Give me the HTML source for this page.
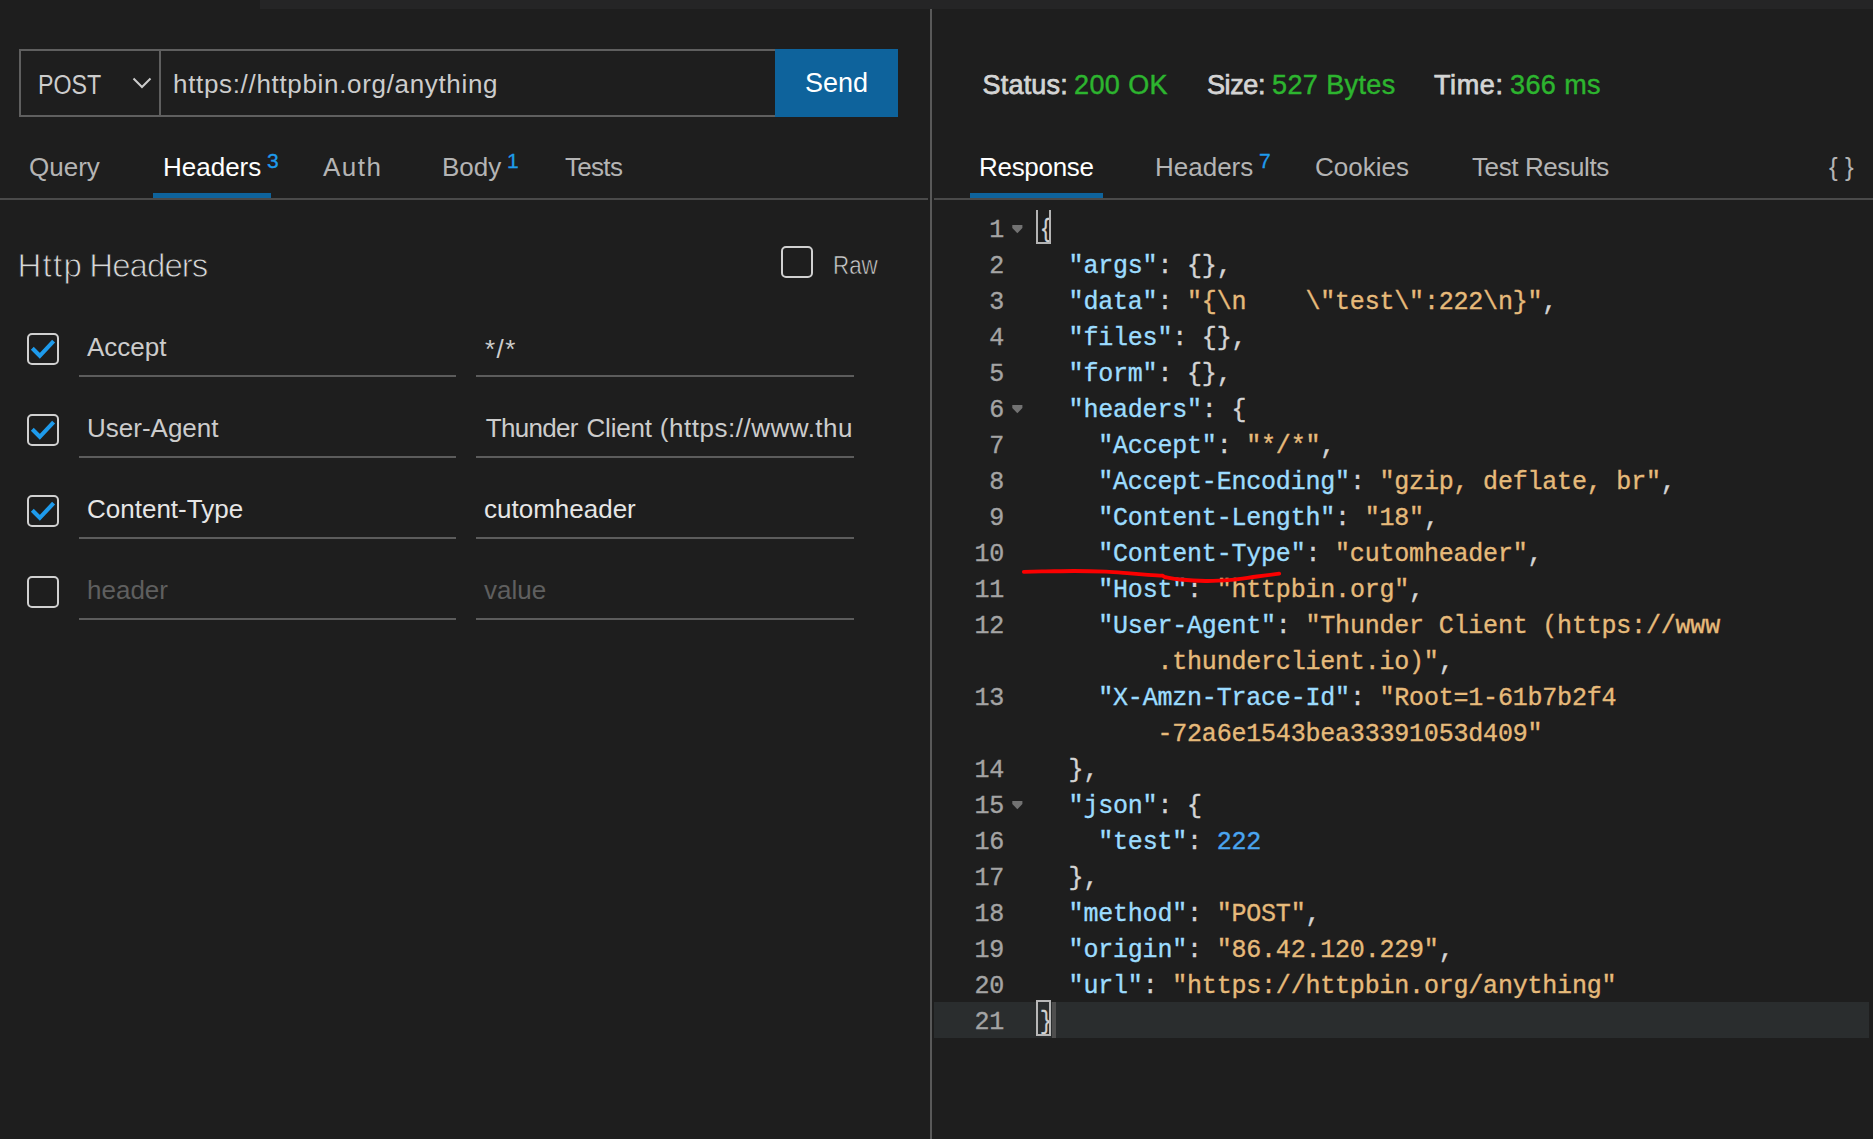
<!DOCTYPE html>
<html>
<head>
<meta charset="utf-8">
<title>Thunder Client</title>
<style>
html,body{margin:0;padding:0;}
body{width:1873px;height:1139px;background:#1e1e1e;overflow:hidden;position:relative;
  font-family:"Liberation Sans",sans-serif;color:#cccccc;}
.a{position:absolute;}
.t{position:absolute;white-space:pre;line-height:1;font-size:26px;color:#cccccc;}
.topstrip{left:260px;top:0;width:1613px;height:9px;background:#252526;}
.vdiv{left:930px;top:9px;width:2px;height:1130px;background:#595959;}
.hline{height:2px;background:#4a4a4a;}
/* request box */
.reqbox{left:19px;top:49px;width:756px;height:68px;box-sizing:border-box;border:2px solid #5f5f5f;border-right:none;}
.reqdiv{left:159px;top:49px;width:2px;height:68px;background:#5f5f5f;}
.send{left:775px;top:49px;width:123px;height:68px;background:#0e639c;}
.tabbar{height:5px;background:#0e639c;}
.sup{font-size:21px;color:#1e9bec;-webkit-text-stroke:0.3px currentColor;}
.cb{width:32px;height:32px;box-sizing:border-box;border:2.5px solid #d0d0d0;border-radius:5px;}
.ul{height:2px;background:#5c5c5c;}
.ph{color:#5f5f5f;}
.g{font-size:27px;color:#2db52f;letter-spacing:0.4px;-webkit-text-stroke:0.45px currentColor;}
/* code */
.ln{position:absolute;white-space:pre;line-height:36px;height:36px;font-family:"Liberation Mono",monospace;font-size:25px;letter-spacing:-0.2px;-webkit-text-stroke:0.35px currentColor;color:#a4a4a4;text-align:right;left:960px;width:44px;}
.cl{position:absolute;white-space:pre;line-height:36px;height:36px;font-family:"Liberation Mono",monospace;font-size:25px;letter-spacing:-0.2px;-webkit-text-stroke:0.35px currentColor;color:#d4d4d4;left:1039px;}
.br{display:inline-block;transform:scaleX(0.8);transform-origin:35% 50%;}
.k{color:#9cdcfe;}
.s{color:#e6ba7a;}
.n{color:#4aa5f0;}
</style>
</head>
<body>
<div class="a topstrip"></div>
<div class="a vdiv"></div>

<!-- LEFT: request bar -->
<div class="a reqbox"></div>
<div class="a reqdiv"></div>
<div class="t" style="left:37.5px;top:72px;font-size:27px;transform:scaleX(0.86);transform-origin:0 0;">POST</div>
<svg class="a" style="left:131px;top:75px;" width="22" height="16" viewBox="0 0 22 16"><path d="M2.5 3.5 L11 12 L19.5 3.5" fill="none" stroke="#cccccc" stroke-width="2"/></svg>
<div class="t" style="left:173px;top:71px;letter-spacing:0.67px;">https://httpbin.org/anything</div>
<div class="a send"></div>
<div class="t" style="left:805px;top:70px;color:#ffffff;font-size:27px;">Send</div>

<!-- LEFT: tabs -->
<div class="t" style="left:29px;top:153.5px;color:#b4b4b4;">Query</div>
<div class="t" style="left:163px;top:153.5px;color:#ffffff;">Headers</div>
<div class="t sup" style="left:267px;top:150px;">3</div>
<div class="t" style="left:323px;top:153.5px;color:#b4b4b4;letter-spacing:1.5px;">Auth</div>
<div class="t" style="left:442px;top:153.5px;color:#b4b4b4;">Body</div>
<div class="t sup" style="left:507px;top:150px;">1</div>
<div class="t" style="left:565px;top:153.5px;color:#b4b4b4;letter-spacing:-0.7px;">Tests</div>
<div class="a tabbar" style="left:153px;top:193px;width:118px;"></div>
<div class="a hline" style="left:0;top:198px;width:928px;"></div>

<!-- LEFT: headers form -->
<div class="t" style="left:17.5px;top:249px;font-size:33px;color:#d8d8d8;letter-spacing:1.27px;-webkit-text-stroke:0.9px #1e1e1e;">Http</div>
<div class="t" style="left:89.3px;top:249px;font-size:33px;color:#d8d8d8;letter-spacing:-0.95px;-webkit-text-stroke:0.9px #1e1e1e;">Headers</div>
<div class="a cb" style="left:781px;top:246px;"></div>
<div class="t" style="left:833px;top:252px;color:#b8b8b8;transform:scaleX(0.86);transform-origin:0 0;-webkit-text-stroke:0.6px #1e1e1e;color:#d0d0d0;">Raw</div>

<div class="a cb" style="left:27px;top:333px;"></div>
<div class="t" style="left:87px;top:334px;">Accept</div>
<div class="a ul" style="left:79px;top:375px;width:377px;"></div>
<div class="t" style="left:485px;top:336px;letter-spacing:1.5px;">*/*</div>
<div class="a ul" style="left:476px;top:375px;width:378px;"></div>

<div class="a cb" style="left:27px;top:414px;"></div>
<div class="t" style="left:87px;top:415px;">User-Agent</div>
<div class="a ul" style="left:79px;top:456px;width:377px;"></div>
<div class="t" style="left:485.8px;top:415px;letter-spacing:-0.7px;">Thunder</div>
<div class="t" style="left:586.5px;top:415px;letter-spacing:-0.18px;">Client</div>
<div class="t" style="left:659.8px;top:415px;letter-spacing:0.52px;">(https://www.thu</div>
<div class="a ul" style="left:476px;top:456px;width:378px;"></div>

<div class="a cb" style="left:27px;top:495px;"></div>
<div class="t" style="left:87px;top:496px;color:#e6e6e6;">Content-Type</div>
<div class="a ul" style="left:79px;top:537px;width:377px;"></div>
<div class="t" style="left:484px;top:496px;color:#e6e6e6;">cutomheader</div>
<div class="a ul" style="left:476px;top:537px;width:378px;"></div>

<div class="a cb" style="left:27px;top:576px;"></div>
<div class="t ph" style="left:87px;top:577px;">header</div>
<div class="a ul" style="left:79px;top:618px;width:377px;"></div>
<div class="t ph" style="left:484px;top:577px;">value</div>
<div class="a ul" style="left:476px;top:618px;width:378px;"></div>

<!-- RIGHT: status -->
<div class="t" style="left:982.5px;top:72px;font-size:27px;-webkit-text-stroke:0.75px currentColor;color:#d4d4d4;letter-spacing:0.2px;">Status:</div>
<div class="t g" style="left:1074px;top:72px;">200 OK</div>
<div class="t" style="left:1207px;top:72px;font-size:27px;-webkit-text-stroke:0.75px currentColor;color:#d4d4d4;letter-spacing:-0.4px;">Size:</div>
<div class="t g" style="left:1272px;top:72px;">527 Bytes</div>
<div class="t" style="left:1434px;top:72px;font-size:27px;-webkit-text-stroke:0.75px currentColor;color:#d4d4d4;letter-spacing:0.6px;">Time:</div>
<div class="t g" style="left:1510px;top:72px;">366 ms</div>

<!-- RIGHT: tabs -->
<div class="t" style="left:979px;top:153.5px;color:#ffffff;letter-spacing:-0.3px;">Response</div>
<div class="t" style="left:1155px;top:153.5px;color:#b4b4b4;">Headers</div>
<div class="t sup" style="left:1259px;top:150px;">7</div>
<div class="t" style="left:1315px;top:153.5px;color:#b4b4b4;">Cookies</div>
<div class="t" style="left:1472px;top:153.5px;color:#b4b4b4;letter-spacing:-0.4px;">Test Results</div>
<div class="t" style="left:1829px;top:153.5px;color:#b4b4b4;">{ }</div>
<div class="a tabbar" style="left:970px;top:193px;width:133px;"></div>
<div class="a hline" style="left:934px;top:198px;width:939px;"></div>

<!-- RIGHT: code -->
<div class="a" style="left:934px;top:1002px;width:935px;height:36px;background:#2a2d2e;"></div>
<!--CODE-->
<div class="ln" style="top:212.5px;">1</div>
<div class="cl" style="top:212.5px;"><span class="br">{</span></div>
<div class="ln" style="top:248.5px;">2</div>
<div class="cl" style="top:248.5px;">  <span class="k">"args"</span>: {},</div>
<div class="ln" style="top:284.5px;">3</div>
<div class="cl" style="top:284.5px;">  <span class="k">"data"</span>: <span class="s">"{\n    \"test\":222\n}"</span>,</div>
<div class="ln" style="top:320.5px;">4</div>
<div class="cl" style="top:320.5px;">  <span class="k">"files"</span>: {},</div>
<div class="ln" style="top:356.5px;">5</div>
<div class="cl" style="top:356.5px;">  <span class="k">"form"</span>: {},</div>
<div class="ln" style="top:392.5px;">6</div>
<div class="cl" style="top:392.5px;">  <span class="k">"headers"</span>: {</div>
<div class="ln" style="top:428.5px;">7</div>
<div class="cl" style="top:428.5px;">    <span class="k">"Accept"</span>: <span class="s">"*/*"</span>,</div>
<div class="ln" style="top:464.5px;">8</div>
<div class="cl" style="top:464.5px;">    <span class="k">"Accept-Encoding"</span>: <span class="s">"gzip, deflate, br"</span>,</div>
<div class="ln" style="top:500.5px;">9</div>
<div class="cl" style="top:500.5px;">    <span class="k">"Content-Length"</span>: <span class="s">"18"</span>,</div>
<div class="ln" style="top:536.5px;">10</div>
<div class="cl" style="top:536.5px;">    <span class="k">"Content-Type"</span>: <span class="s">"cutomheader"</span>,</div>
<div class="ln" style="top:572.5px;">11</div>
<div class="cl" style="top:572.5px;">    <span class="k">"Host"</span>: <span class="s">"httpbin.org"</span>,</div>
<div class="ln" style="top:608.5px;">12</div>
<div class="cl" style="top:608.5px;">    <span class="k">"User-Agent"</span>: <span class="s">"Thunder Client (https://www</span></div>
<div class="cl" style="top:644.5px;">        <span class="s">.thunderclient.io)"</span>,</div>
<div class="ln" style="top:680.5px;">13</div>
<div class="cl" style="top:680.5px;">    <span class="k">"X-Amzn-Trace-Id"</span>: <span class="s">"Root=1-61b7b2f4</span></div>
<div class="cl" style="top:716.5px;">        <span class="s">-72a6e1543bea33391053d409"</span></div>
<div class="ln" style="top:752.5px;">14</div>
<div class="cl" style="top:752.5px;">  },</div>
<div class="ln" style="top:788.5px;">15</div>
<div class="cl" style="top:788.5px;">  <span class="k">"json"</span>: {</div>
<div class="ln" style="top:824.5px;">16</div>
<div class="cl" style="top:824.5px;">    <span class="k">"test"</span>: <span class="n">222</span></div>
<div class="ln" style="top:860.5px;">17</div>
<div class="cl" style="top:860.5px;">  },</div>
<div class="ln" style="top:896.5px;">18</div>
<div class="cl" style="top:896.5px;">  <span class="k">"method"</span>: <span class="s">"POST"</span>,</div>
<div class="ln" style="top:932.5px;">19</div>
<div class="cl" style="top:932.5px;">  <span class="k">"origin"</span>: <span class="s">"86.42.120.229"</span>,</div>
<div class="ln" style="top:968.5px;">20</div>
<div class="cl" style="top:968.5px;">  <span class="k">"url"</span>: <span class="s">"https://httpbin.org/anything"</span></div>
<div class="ln" style="top:1004.5px;">21</div>
<div class="cl" style="top:1004.5px;"><span class="br">}</span></div>
<svg class="a" style="left:1011.5px;top:225px;" width="11" height="9" viewBox="0 0 11 9"><path d="M0.3 0 H10.4 V3.1 L5.35 8.2 L0.3 3.1 Z" fill="#727272"/></svg>
<svg class="a" style="left:1011.5px;top:405px;" width="11" height="9" viewBox="0 0 11 9"><path d="M0.3 0 H10.4 V3.1 L5.35 8.2 L0.3 3.1 Z" fill="#727272"/></svg>
<svg class="a" style="left:1011.5px;top:801px;" width="11" height="9" viewBox="0 0 11 9"><path d="M0.3 0 H10.4 V3.1 L5.35 8.2 L0.3 3.1 Z" fill="#727272"/></svg>
<!--/CODE-->

<!-- checkmarks -->
<svg class="a" style="left:27px;top:333px;" width="32" height="32" viewBox="0 0 32 32"><path d="M5.3 15.3 L12.8 22.8 L26.6 8.2" fill="none" stroke="#1e9bec" stroke-width="4.1"/></svg>
<svg class="a" style="left:27px;top:414px;" width="32" height="32" viewBox="0 0 32 32"><path d="M5.3 15.3 L12.8 22.8 L26.6 8.2" fill="none" stroke="#1e9bec" stroke-width="4.1"/></svg>
<svg class="a" style="left:27px;top:495px;" width="32" height="32" viewBox="0 0 32 32"><path d="M5.3 15.3 L12.8 22.8 L26.6 8.2" fill="none" stroke="#1e9bec" stroke-width="4.1"/></svg>
<!-- bracket match boxes + cursor -->
<div class="a" style="left:1036px;top:210px;width:15px;height:34px;box-sizing:border-box;border:2px solid #b4b4b4;border-top:none;"></div>
<div class="a" style="left:1036px;top:1000px;width:15px;height:36px;box-sizing:border-box;border:2px solid #b8b8b8;"></div>
<div class="a" style="left:1052px;top:1002px;width:4px;height:36px;background:#4e4e4e;"></div>
<!-- red annotation -->
<svg class="a" style="left:1010px;top:560px;" width="290" height="34" viewBox="1010 560 290 34"><path d="M1023.8 571.8 C1027.3 571.7 1036.6 571.5 1045.0 571.4 C1053.4 571.3 1063.8 571.0 1074.0 571.0 C1084.2 571.0 1096.7 571.3 1106.0 571.7 C1115.3 572.1 1123.0 572.9 1130.0 573.4 C1137.0 573.9 1142.5 574.4 1148.0 574.8 C1153.5 575.2 1160.3 575.6 1162.8 575.7 L1164.6 577.0 C1167.2 577.4 1173.2 578.8 1180.0 579.5 C1186.8 580.2 1197.0 580.9 1205.6 581.0 C1214.1 581.1 1222.7 580.6 1231.3 579.9 C1239.9 579.1 1249.0 577.5 1257.0 576.5 C1265.0 575.5 1275.5 574.1 1279.2 573.6" fill="none" stroke="#fb0000" stroke-width="3.8" stroke-linecap="round" stroke-linejoin="round"/></svg>
</body>
</html>
